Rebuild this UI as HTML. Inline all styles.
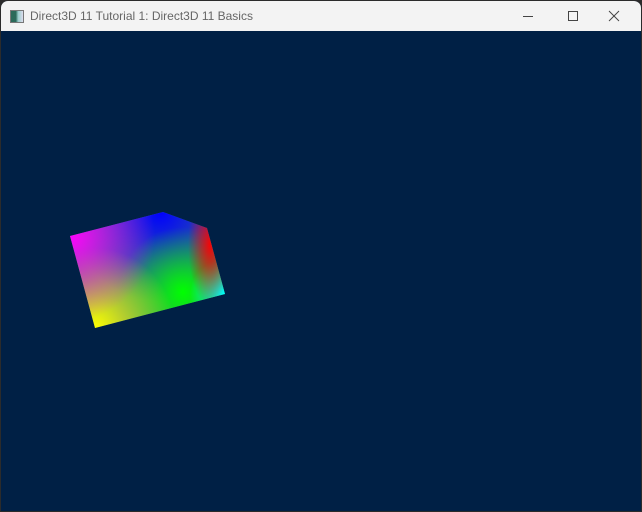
<!DOCTYPE html>
<html><head><style>
html,body{margin:0;padding:0;width:642px;height:512px;overflow:hidden;background:#2b2b2b}
.win{position:absolute;left:1px;top:1px;width:640px;height:510px;background:#002045;border-radius:7px 7px 0 0;overflow:hidden}
.tb{position:absolute;left:0;top:0;width:640px;height:30px;background:#f3f3f3;font:12px "Liberation Sans",sans-serif;color:#666}
.tb .t{position:absolute;left:29px;top:8px}
.ico{position:absolute;left:9px;top:9px;width:12px;height:11px;border:1px solid #777;background:linear-gradient(90deg,#2b6a5a 40%,#9cc 60%,#dde)}
.cube{position:absolute;left:0;top:0;width:642px;height:512px;
clip-path:polygon(70px 236px,163px 212px,207px 228px,225px 294px,95px 328px);
background:
radial-gradient(ellipse 22px 60px at 210px 245px,rgba(255,0,0,.95) 0,rgba(255,0,0,0) 100%),
radial-gradient(circle at 225px 294px,rgba(0,255,255,1) 0,rgba(0,255,255,0) 35px),
radial-gradient(circle at 70px 236px,rgba(255,0,255,1) 0,rgba(255,0,255,0) 85px),
radial-gradient(circle at 95px 328px,rgba(255,255,0,1) 0,rgba(255,255,0,0) 80px),
radial-gradient(circle at 183px 292px,rgba(0,255,0,1) 0,rgba(0,255,0,0) 65px),
radial-gradient(circle at 160px 212px,rgba(0,0,255,1) 0,rgba(0,0,255,0) 90px),
#408078;}
</style></head><body>
<div class="win">
<div class="tb"><div class="ico"></div><span class="t">Direct3D 11 Tutorial 1: Direct3D 11 Basics</span>
<svg style="position:absolute;left:520px;top:8px" width="100" height="14">
<line x1="2" y1="7.5" x2="12" y2="7.5" stroke="#444" stroke-width="1"/>
<rect x="47.5" y="2.5" width="9" height="9" fill="none" stroke="#444"/>
<line x1="88" y1="2" x2="98" y2="12" stroke="#444"/><line x1="98" y1="2" x2="88" y2="12" stroke="#444"/>
</svg></div>
</div>
<div class="cube"></div>
</body></html>
